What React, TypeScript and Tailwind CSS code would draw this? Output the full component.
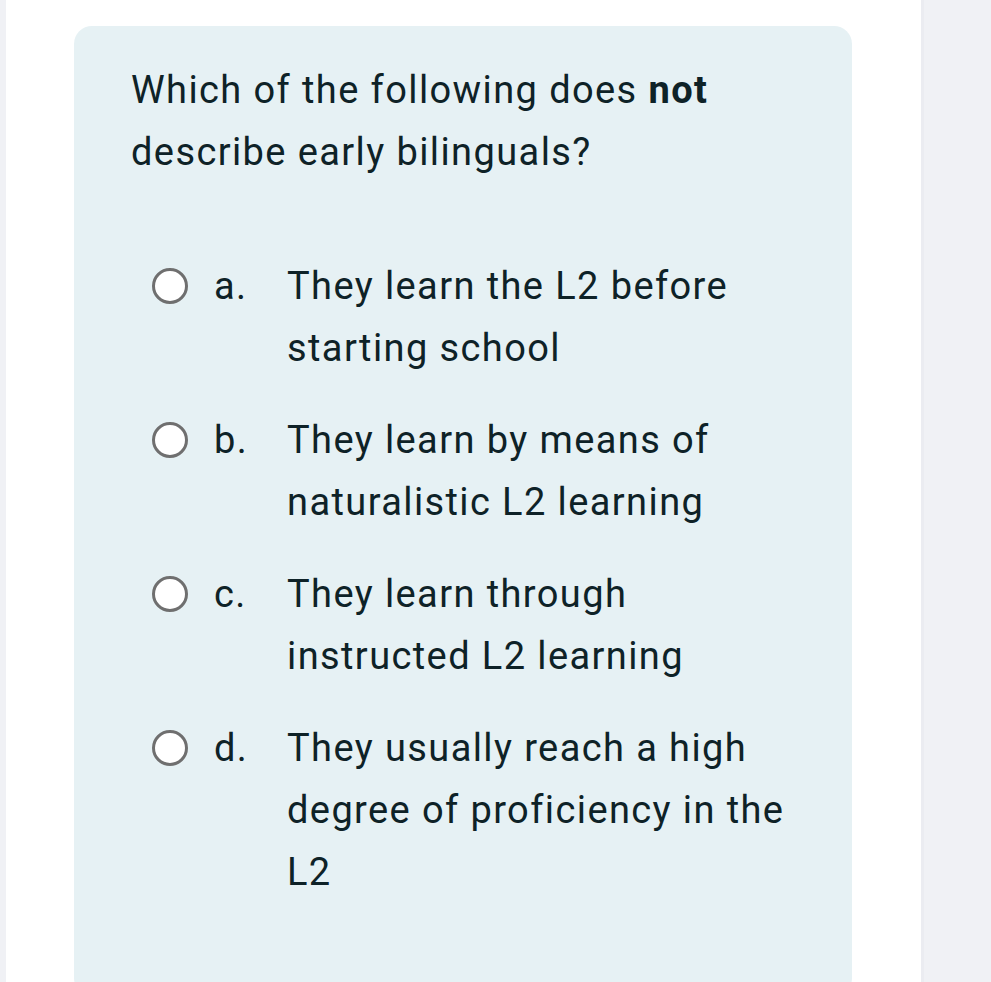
import React from "react";

const options = [
  { letter: "a.", text: "They learn the L2 before starting school" },
  { letter: "b.", text: "They learn by means of naturalistic L2 learning" },
  { letter: "c.", text: "They learn through instructed L2 learning" },
  { letter: "d.", text: "They usually reach a high degree of proficiency in the L2" },
];

export default function App() {
  return (
    <div
      className="flex h-[982px] w-[991px] overflow-hidden bg-white text-[#0e2227]"
      style={{ fontFamily: "Roboto, 'Noto Sans', sans-serif" }}
    >
      <div className="h-full w-[6px] shrink-0 bg-[#f0f1f5]" />
      <div className="h-full w-[68px] shrink-0" />
      <div className="mt-[26px] h-[970px] w-[778px] shrink-0 rounded-[18px] bg-[#e6f1f4] pl-[57px] pr-[50px] pt-[33px]">
        <p className="text-[38px] leading-[62px] tracking-[1.4px]">
          Which of the following does <span className="font-bold">not</span> describe early bilinguals?
        </p>
        <div className="mt-[72px] flex flex-col gap-[30px]">
          {options.map((o) => (
            <div key={o.letter} className="flex items-start">
              <div className="ml-[21px] mt-[13px] h-[36px] w-[36px] shrink-0 rounded-full border-[3px] border-[#6f6f6f] bg-white" />
              <div className="ml-[26px] w-[73px] shrink-0 text-[38px] leading-[62px] tracking-[1.4px]">{o.letter}</div>
              <div className="text-[38px] leading-[62px] tracking-[1.4px]">{o.text}</div>
            </div>
          ))}
        </div>
      </div>
      <div className="h-full w-[69px] shrink-0" />
      <div className="h-full w-[70px] shrink-0 border-l-[3px] border-[#ebecf1] bg-[#f0f1f5]" />
    </div>
  );
}
